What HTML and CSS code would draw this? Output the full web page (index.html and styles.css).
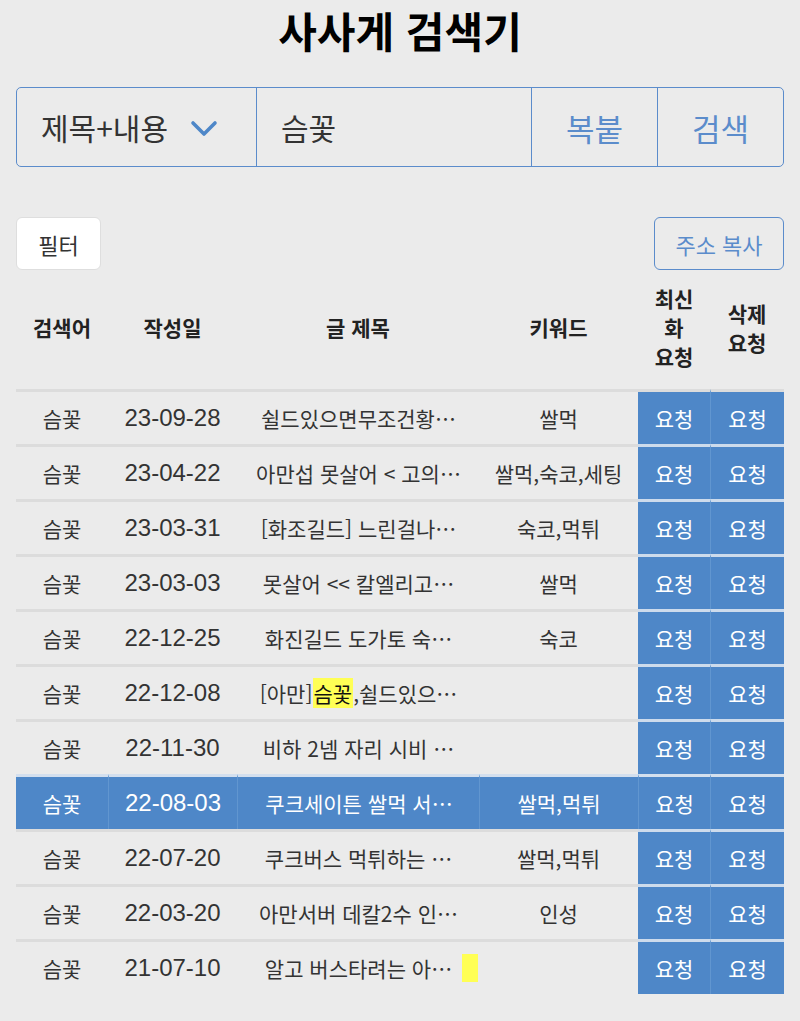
FILE: index.html
```html
<!DOCTYPE html>
<html lang="ko">
<head>
<meta charset="utf-8">
<title>사사게 검색기</title>
<link rel="stylesheet" href="styles.css">
</head>
<body>
<div class="page">
  <h1 class="title">사사게 검색기</h1>

  <div class="search">
    <div class="seg select">
      <span class="select-text">제목+내용</span>
      <svg class="chev" width="28" height="17" viewBox="0 0 28 17"><polyline points="3,3 14,14 25,3" fill="none" stroke="#4e87c8" stroke-width="3.6" stroke-linecap="round" stroke-linejoin="round"/></svg>
    </div>
    <div class="seg input">슴꽃</div>
    <div class="seg btn">복붙</div>
    <div class="seg btn">검색</div>
  </div>

  <div class="toolbar">
    <button class="filter">필터</button>
    <button class="copy">주소 복사</button>
  </div>

  <table class="results">
    <colgroup>
      <col class="c-kw"><col class="c-date"><col class="c-title"><col class="c-key"><col class="c-req"><col class="c-del">
    </colgroup>
    <thead>
      <tr>
        <th>검색어</th>
        <th>작성일</th>
        <th>글 제목</th>
        <th>키워드</th>
        <th>최신<br>화<br>요청</th>
        <th>삭제<br>요청</th>
      </tr>
    </thead>
    <tbody>
      <tr><td>슴꽃</td><td class="date">23-09-28</td><td class="ttl">쉴드있으면무조건황<span class="ell">…</span></td><td>쌀먹</td><td class="req">요청</td><td class="req r2">요청</td></tr>
      <tr><td>슴꽃</td><td class="date">23-04-22</td><td class="ttl">아만섭 못살어 &lt; 고의<span class="ell">…</span></td><td>쌀먹,숙코,세팅</td><td class="req">요청</td><td class="req r2">요청</td></tr>
      <tr><td>슴꽃</td><td class="date">23-03-31</td><td class="ttl">[화조길드] 느린걸나<span class="ell">…</span></td><td>숙코,먹튀</td><td class="req">요청</td><td class="req r2">요청</td></tr>
      <tr><td>슴꽃</td><td class="date">23-03-03</td><td class="ttl">못살어 &lt;&lt; 칼엘리고<span class="ell">…</span></td><td>쌀먹</td><td class="req">요청</td><td class="req r2">요청</td></tr>
      <tr><td>슴꽃</td><td class="date">22-12-25</td><td class="ttl">화진길드 도가토 숙<span class="ell">…</span></td><td>숙코</td><td class="req">요청</td><td class="req r2">요청</td></tr>
      <tr><td>슴꽃</td><td class="date">22-12-08</td><td class="ttl">[아만]<mark class="hl">슴꽃</mark>,쉴드있으<span class="ell">…</span></td><td></td><td class="req">요청</td><td class="req r2">요청</td></tr>
      <tr><td>슴꽃</td><td class="date">22-11-30</td><td class="ttl">비하 2넴 자리 시비 <span class="ell">…</span></td><td></td><td class="req">요청</td><td class="req r2">요청</td></tr>
      <tr class="selected"><td>슴꽃</td><td class="date">22-08-03</td><td class="ttl">쿠크세이튼 쌀먹 서<span class="ell">…</span></td><td>쌀먹,먹튀</td><td class="req">요청</td><td class="req r2">요청</td></tr>
      <tr><td>슴꽃</td><td class="date">22-07-20</td><td class="ttl">쿠크버스 먹튀하는 <span class="ell">…</span></td><td>쌀먹,먹튀</td><td class="req">요청</td><td class="req r2">요청</td></tr>
      <tr><td>슴꽃</td><td class="date">22-03-20</td><td class="ttl">아만서버 데칼2수 인<span class="ell">…</span></td><td>인성</td><td class="req">요청</td><td class="req r2">요청</td></tr>
      <tr><td>슴꽃</td><td class="date">21-07-10</td><td class="ttl tail">알고 버스타려는 아<span class="ell">…</span><span class="mark-tail"></span></td><td></td><td class="req">요청</td><td class="req r2">요청</td></tr>
    </tbody>
  </table>
</div>
</body>
</html>
```

FILE: styles.css
```css
* { box-sizing: border-box; }

html, body {
  margin: 0;
  padding: 0;
  background: #ebebeb;
}

body {
  font-family: "Noto Sans CJK KR", "Noto Sans", sans-serif;
  color: #333;
}

.page {
  padding: 0 16px;
}

.title {
  margin: 0;
  height: 60px;
  line-height: 60px;
  font-size: 42px;
  font-weight: 700;
  text-align: center;
  color: #000;
}

.search {
  margin-top: 27px;
  height: 80px;
  display: grid;
  grid-template-columns: 239px 275px 126px 1fr;
  border: 1.5px solid #5b8ccb;
  border-radius: 5px;
}

.seg {
  display: flex;
  align-items: center;
  height: 100%;
}

.seg + .seg {
  border-left: 1.5px solid #5b8ccb;
}

.select {
  padding-left: 24px;
  font-size: 30px;
  color: #333;
  gap: 22px;
}

.chev {
  margin-top: 2px;
}

.input {
  padding-left: 24px;
  font-size: 30px;
  color: #333;
}

.btn {
  justify-content: center;
  font-size: 31px;
  color: #5b8ccb;
}

.toolbar {
  margin-top: 50px;
  display: flex;
  justify-content: space-between;
  align-items: center;
}

.toolbar button {
  font-family: inherit;
  height: 53px;
  border-radius: 6px;
  padding: 0;
  cursor: pointer;
}

.filter {
  width: 85px;
  background: #fff;
  border: 1px solid #dedede;
  font-size: 22px;
  color: #333;
}

.copy {
  width: 130px;
  background: transparent;
  border: 1.5px solid #5b8ccb;
  font-size: 22px;
  color: #5b8ccb;
}

.results {
  width: 100%;
  table-layout: fixed;
  border-collapse: separate;
  border-spacing: 0;
}

.c-kw { width: 92px; }
.c-date { width: 129px; }
.c-title { width: 242px; }
.c-key { width: 159px; }
.c-req { width: 72px; }
.c-del { width: 74px; }

.results th {
  padding: 14px 0 18px;
  font-size: 21px;
  font-weight: 700;
  line-height: 29px;
  color: #222;
  text-align: center;
  vertical-align: middle;
}

.results td {
  height: 55px;
  padding: 0 6px;
  border-top: 3px solid #dcdcdc;
  font-size: 21px;
  line-height: 28px;
  text-align: center;
  vertical-align: middle;
  white-space: nowrap;
  overflow: hidden;
  color: #333;
}

.results td.date {
  font-family: "Liberation Sans", "Noto Sans CJK KR", sans-serif;
  font-size: 24px;
}

.results td.ttl {
  padding: 0 4px;
}

.ell {
  display: inline-block;
  width: 20px;
  text-align: center;
}

.results td.req {
  background: #4e87c8;
  color: #fff;
  border-top-color: #cddbec;
}

.results tbody tr:first-child td.req {
  border-top-color: #dcdcdc;
}

.results td.r2 {
  border-left: 1px solid #6196d0;
}

.results tr.selected td {
  background: #4e87c8;
  color: #fff;
  border-top-color: #d3dfee;
}

.results tr.selected td + td {
  border-left: 1px solid #6196d0;
}

.hl {
  background: #ffff55;
  color: #111;
  padding: 0 1px;
}

.tail {
  position: relative;
}

.mark-tail {
  position: absolute;
  right: 1px;
  top: 12px;
  width: 16px;
  height: 28px;
  background: #ffff55;
}
```
